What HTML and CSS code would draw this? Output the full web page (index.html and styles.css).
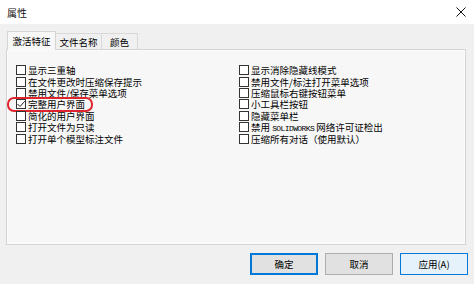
FILE: index.html
```html
<!DOCTYPE html>
<html lang="zh">
<head>
<meta charset="utf-8">
<link rel="stylesheet" href="styles.css">
</head>
<body>
<div class="dialog">
  <div class="titlebar">
    <span class="title">属性</span>
    <svg class="close" width="10" height="10" viewBox="0 0 10 10"><path d="M0.5 0.5L9.5 9.5M9.5 0.5L0.5 9.5" stroke="#111" stroke-width="1" fill="none"/></svg>
  </div>
  <div class="content">
    <div class="tabs">
      <div class="tab active">激活特征</div>
      <div class="tab t2">文件名称</div>
      <div class="tab t3">颜色</div>
    </div>
    <div class="panel">
      <div class="col left">
        <div class="row"><span class="box"></span><span class="lbl">显示三重轴</span></div>
        <div class="row"><span class="box"></span><span class="lbl">在文件更改时压缩保存提示</span></div>
        <div class="row"><span class="box"></span><span class="lbl">禁用文件/保存菜单选项</span></div>
        <div class="row mark"><span class="box checked"><svg width="10" height="10" viewBox="0 0 10 10"><path d="M1.5 5L4 7.5L8.8 2.2" stroke="#222" stroke-width="1" fill="none"/></svg></span><span class="lbl">完整用户界面</span><span class="ring"></span></div>
        <div class="row"><span class="box"></span><span class="lbl">简化的用户界面</span></div>
        <div class="row"><span class="box"></span><span class="lbl">打开文件为只读</span></div>
        <div class="row"><span class="box"></span><span class="lbl">打开单个模型标注文件</span></div>
      </div>
      <div class="col right">
        <div class="row"><span class="box"></span><span class="lbl">显示消除隐藏线模式</span></div>
        <div class="row"><span class="box"></span><span class="lbl">禁用文件/标注打开菜单选项</span></div>
        <div class="row"><span class="box"></span><span class="lbl">压缩鼠标右键按钮菜单</span></div>
        <div class="row"><span class="box"></span><span class="lbl">小工具栏按钮</span></div>
        <div class="row"><span class="box"></span><span class="lbl">隐藏菜单栏</span></div>
        <div class="row"><span class="box"></span><span class="lbl">禁用 <span class="mono">SOLIDWORKS</span> 网络许可证检出</span></div>
        <div class="row"><span class="box"></span><span class="lbl">压缩所有对话（使用默认）</span></div>
      </div>
    </div>
    <div class="buttons">
      <div class="btn default">确定</div>
      <div class="btn">取消</div>
      <div class="btn hover">应用(A)</div>
    </div>
  </div>
</div>
</body>
</html>
```
FILE: styles.css
```css
* { box-sizing: border-box; }
html, body { margin: 0; padding: 0; }
body {
  width: 474px;
  height: 284px;
  background: #f0f0f0;
  font-family: "Noto Sans CJK SC", "Microsoft YaHei", sans-serif;
  font-size: 9.5px;
  color: #000;
  overflow: hidden;
}
.dialog { width: 474px; height: 284px; }
.titlebar {
  height: 24px;
  background: #fff;
  display: flex;
  align-items: center;
  justify-content: space-between;
  padding: 0 8px 0 7px;
}
.title { font-size: 10px; color: #111; }
.close { display: block; }
.content { padding-top: 7px; }
.tabs {
  display: flex;
  align-items: flex-end;
  height: 18px;
  margin-left: 7px;
  position: relative;
  z-index: 2;
}
.tab {
  height: 16px;
  border: 1px solid #d9d9d9;
  border-bottom: none;
  background: #f0f0f0;
  display: flex;
  align-items: center;
  justify-content: center;
  font-size: 9.5px;
  margin-left: -1px;
}
.tab.active {
  width: 49px;
  height: 19px;
  margin-left: 0;
  margin-bottom: -1px;
  background: #f7f7f7;
  border-color: #d4d4d4;
  z-index: 3;
}
.tab.t2 { width: 47px; }
.tab.t3 { width: 37px; }
.panel {
  margin-left: 6px;
  width: 460px;
  height: 196px;
  border: 1px solid #d4d4d4;
  background: #f7f7f7;
  box-shadow: inset 0 0 0 1px #fbfbfb;
  display: grid;
  grid-template-columns: 223px 1fr;
  padding: 14.5px 0 0 9px;
  position: relative;
}
.col { display: flex; flex-direction: column; }
.row {
  height: 11.4px;
  display: flex;
  align-items: center;
  white-space: nowrap;
  position: relative;
  line-height: 1;
}
.lbl { line-height: 10px; height: 10px; overflow: visible; }
.box {
  width: 10px;
  height: 10px;
  border: 1px solid #333;
  background: #fff;
  margin-right: 2px;
  flex: none;
  position: relative;
}
.box svg { position: absolute; left: -1px; top: -1px; }
.mono {
  font-family: "Liberation Mono", monospace;
  font-size: 8px;
  letter-spacing: -0.6px;
}
.ring {
  position: absolute;
  left: -9px;
  top: -1.5px;
  width: 86px;
  height: 14.5px;
  border: 2px solid #e0242c;
  border-radius: 7px;
}
.buttons {
  display: flex;
  justify-content: flex-end;
  gap: 7px;
  margin-top: 8px;
  padding-right: 6px;
}
.btn {
  width: 68px;
  height: 22px;
  border: 1px solid #adadad;
  background: #e1e1e1;
  display: flex;
  align-items: center;
  justify-content: center;
  font-size: 9.5px;
}
.btn.default { border: 2px solid #0078d7; }
.btn.hover { background: #e5f1fb; border-color: #0078d7; }
```
